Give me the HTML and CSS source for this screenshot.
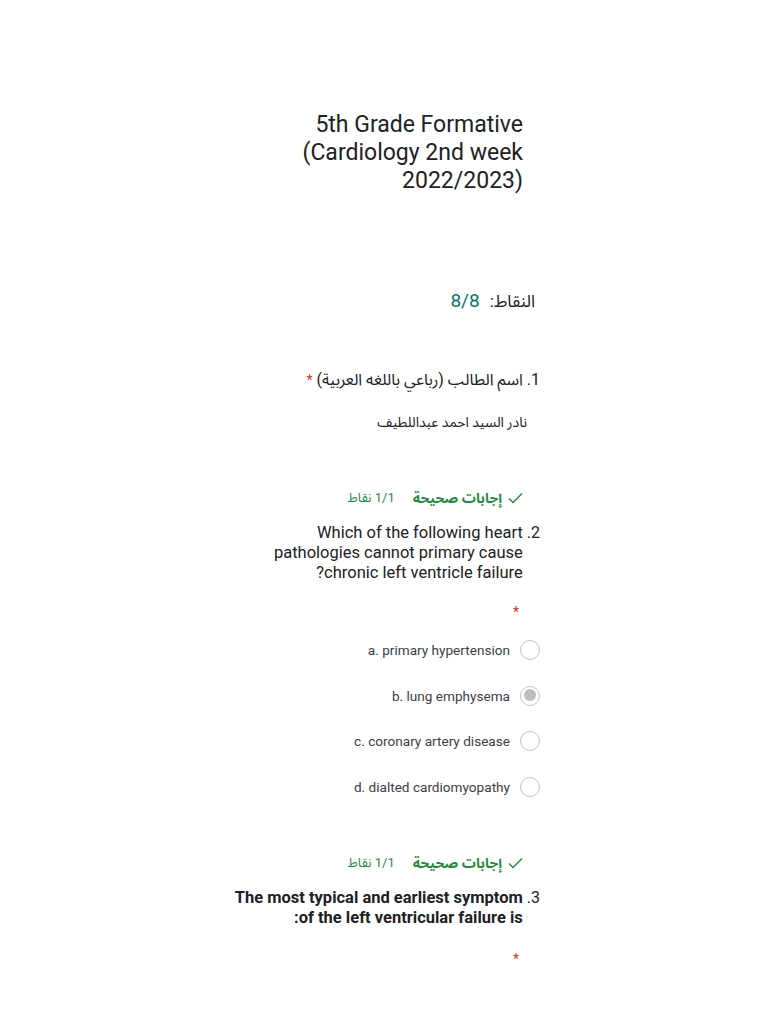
FILE: index.html
```html
<!DOCTYPE html>
<html lang="ar" dir="rtl">
<head>
<meta charset="utf-8">
<link rel="stylesheet" href="styles.css">
</head>
<body>
<main class="page">
  <h1 class="title">5th Grade Formative (Cardiology 2nd week 2022/2023)</h1>

  <div class="score"><span class="score-label">النقاط:</span> <span class="score-value">8/8</span></div>

  <section class="q q1">
    <div class="q-head">
      <span class="q-num">1.</span>
      <span class="q-text">اسم الطالب (رباعي باللغه العربية) <span class="req">*</span></span>
    </div>
    <div class="answer">نادر السيد احمد عبداللطيف</div>
  </section>

  <section class="q q2">
    <div class="correct">
      <svg class="check" width="15" height="12" viewBox="0 0 15 12"><polyline points="1,6.5 5,10.5 14,1.5" fill="none" stroke="#1e8e3e" stroke-width="1.4"/></svg>
      <span class="correct-text">إجابات صحيحة</span>
      <span class="points">1/1 نقاط</span>
    </div>
    <div class="q-head">
      <span class="q-num">2.</span>
      <span class="q-text">Which of the following heart pathologies cannot primary cause chronic left ventricle failure?</span>
    </div>
    <div class="req-line"><span class="req">*</span></div>
    <ul class="options">
      <li class="opt"><span class="radio"></span><span class="opt-text">a. primary hypertension</span></li>
      <li class="opt"><span class="radio checked"></span><span class="opt-text">b. lung emphysema</span></li>
      <li class="opt"><span class="radio"></span><span class="opt-text">c. coronary artery disease</span></li>
      <li class="opt"><span class="radio"></span><span class="opt-text">d. dialted cardiomyopathy</span></li>
    </ul>
  </section>

  <section class="q q3">
    <div class="correct">
      <svg class="check" width="15" height="12" viewBox="0 0 15 12"><polyline points="1,6.5 5,10.5 14,1.5" fill="none" stroke="#1e8e3e" stroke-width="1.4"/></svg>
      <span class="correct-text">إجابات صحيحة</span>
      <span class="points">1/1 نقاط</span>
    </div>
    <div class="q-head">
      <span class="q-num">3.</span>
      <span class="q-text bold">The most typical and earliest symptom of the left ventricular failure is:</span>
    </div>
    <div class="req-line last"><span class="req">*</span></div>
  </section>
</main>
</body>
</html>
```

FILE: styles.css
```css
html, body {
  margin: 0;
  padding: 0;
  background: #ffffff;
}

body {
  font-family: Roboto, "Noto Sans Arabic", "DejaVu Sans", sans-serif;
  color: #202124;
}

.page {
  width: 312px;
  margin: 0 auto;
  direction: rtl;
  text-align: right;
  padding-top: 111px;
}

.title {
  margin: 0;
  padding-right: 17px;
  font-size: 23px;
  line-height: 28px;
  font-weight: 400;
  color: #202124;
}

.score {
  margin-top: 94px;
  padding-right: 5px;
  font-size: 17px;
  line-height: 24px;
  color: #202124;
}

.score-value {
  color: #00796b;
  font-size: 19px;
  margin-right: 6px;
}

.q1 {
  margin-top: 55px;
}

.q-head {
  display: flex;
  flex-direction: row;
  align-items: flex-start;
  gap: 4px;
}

.q-num {
  flex: 0 0 auto;
  font-size: 16px;
  line-height: 20px;
  color: #202124;
}

.q-text {
  flex: 1 1 auto;
  font-size: 16.5px;
  line-height: 20px;
  color: #202124;
}

.q1 .q-num,
.q1 .q-text {
  line-height: 24px;
}

.q1 .q-text {
  font-size: 16px;
}

.q-text.bold {
  font-weight: 700;
}

.req {
  color: #d93025;
  font-size: 14px;
}

.answer {
  margin-top: 20px;
  padding-right: 13px;
  font-size: 14px;
  line-height: 20px;
  color: #202124;
}

.q2 {
  margin-top: 56px;
}

.q3 {
  margin-top: 43px;
}

.correct {
  display: flex;
  align-items: center;
  gap: 6px;
  padding-right: 17px;
  height: 20px;
  margin-bottom: 15px;
  color: #1e8e3e;
}

.check {
  flex: 0 0 auto;
}

.correct-text {
  font-size: 14px;
  font-weight: 700;
  line-height: 20px;
}

.points {
  font-size: 13px;
  line-height: 20px;
  margin-right: 12px;
}

.req-line {
  margin-top: 19px;
  padding-right: 21px;
  line-height: 20px;
  height: 20px;
}

.req-line.last {
  margin-top: 21px;
}

.options {
  list-style: none;
  margin: 5px 0 0 0;
  padding: 0;
}

.opt {
  display: flex;
  align-items: center;
  height: 45.7px;
  gap: 10px;
}

.radio {
  box-sizing: border-box;
  width: 20px;
  height: 20px;
  border: 1.5px solid #c4c4c4;
  border-radius: 50%;
  flex: 0 0 auto;
  position: relative;
}

.radio.checked::after {
  content: "";
  position: absolute;
  top: 2.5px;
  left: 2.5px;
  width: 12px;
  height: 12px;
  border-radius: 50%;
  background: #bdbdbd;
}

.opt-text {
  font-size: 13.6px;
  line-height: 20px;
  color: #3c4043;
}
```
